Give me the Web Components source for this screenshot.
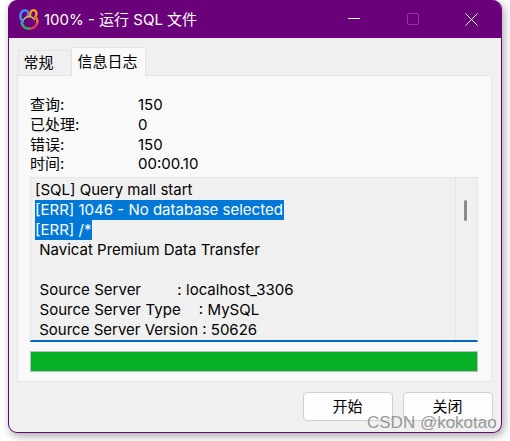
<!DOCTYPE html>
<html lang="zh">
<head>
<meta charset="utf-8">
<style>
html, body { margin: 0; padding: 0; background: #fff; }
body { width: 510px; height: 441px; overflow: hidden; font: 15px Inter, "Noto Sans CJK SC", sans-serif; color: #000; }
</style>
</head>
<body>
<app-window title-text="100% - 运行 SQL 文件">
  <tab-view>
    <stat-list>
      <span>查询:</span><span>150</span>
      <span>已处理:</span><span>0</span>
      <span>错误:</span><span>150</span>
      <span>时间:</span><span>00:00.10</span>
    </stat-list>
    <log-view></log-view>
    <progress-line></progress-line>
  </tab-view>
  <div slot="buttons" style="display:flex;justify-content:flex-end;gap:10px">
    <win-button>开始</win-button>
    <win-button>关闭</win-button>
  </div>
</app-window>
<script>
class AppWindow extends HTMLElement {
    constructor() {
        super();
        this.shadow = this.attachShadow({mode: 'open'});
    }
    connectedCallback() {
        this.shadow.innerHTML = `
        <style>
            :host {
                display: flex;
                flex-direction: column;
                box-sizing: border-box;
                width: 494px;
                height: 433px;
                margin-left: 8px;
                background: #f0f0f0;
                border: 1px solid #6a007a;
                border-top: 0;
                border-radius: 9px;
                box-shadow: 2px 3px 9px rgba(0,0,0,.35);
                overflow: hidden;
            }
            .title {
                display: flex;
                align-items: center;
                height: 38px;
                flex: none;
                background: #6a007a;
                color: #fff;
                font-size: 15px;
                padding-left: 9px;
            }
            .title svg.logo { width: 22px; height: 22px; margin-right: 4px; flex: none; }
            .name { flex: 1; padding-bottom: 1px; }
            .ctl { width: 59px; height: 38px; display: flex; align-items: center; justify-content: center; flex: none; }
            .body { flex: 1; display: flex; flex-direction: column; padding: 9px 9.5px 0 7.5px; }
            .foot { padding: 10px 0 0 0; margin-right: -1px; }
        </style>
        <div class="title">
            <svg class="logo" viewBox="0 0 22 22" fill="none" stroke-width="2.4" stroke-linecap="round">
                <path d="M4.8 13.5C1.2 10.5 1.6 4.6 5.4 2.6 8 1.4 10.2 3.2 10.2 6" stroke="#3d8ff2"/>
                <path d="M10.2 6C10.2 7 9.8 8 9.2 8.6" stroke="#7d6fe6"/>
                <path d="M12.2 8C11.4 4.4 13.6 1.8 16 2.2 18.8 2.8 19.2 6 17.4 8.8" stroke="#f5a21c"/>
                <path d="M17.4 8.8C19.4 11 19.8 13.8 18.8 16" stroke="#f0752a"/>
                <path d="M18.8 16C17.4 19 14.4 20.6 11.2 20.6" stroke="#e23d4e"/>
                <path d="M11.2 20.6C8 20.6 5 18.6 3.9 15.6" stroke="#2fb457"/>
                <path d="M3.9 15.6C3.6 14.6 3.7 14 4.8 13.5" stroke="#2aa7b8"/>
                <path d="M5.6 11.6C7 9.6 9 8.6 11 8.6 13.4 8.6 15.4 9.8 16.6 11.6" stroke="#c9d147" stroke-width="1.3"/>
            </svg>
            <span class="name">${this.getAttribute('title-text')}</span>
            <div class="ctl"><svg width="12" height="12" viewBox="0 0 12 12"><path d="M0 5.5H12" stroke="#fff" stroke-width="1"/></svg></div>
            <div class="ctl"><svg width="12" height="12" viewBox="0 0 12 12"><rect x=".5" y=".5" width="11" height="11" rx="1.5" fill="none" stroke="#8a3d98"/></svg></div>
            <div class="ctl"><svg width="13" height="13" viewBox="0 0 13 13"><path d="M.5 .5L12.5 12.5M12.5 .5L.5 12.5" stroke="#fff" stroke-width="1"/></svg></div>
        </div>
        <div class="body">
            <slot></slot>
            <div class="foot"><slot name="buttons"></slot></div>
        </div>`;
    }
}
class TabView extends HTMLElement {
    constructor() {
        super();
        this.shadow = this.attachShadow({mode: 'open'});
    }
    connectedCallback() {
        this.shadow.innerHTML = `
        <style>
            :host { display: block; }
            .tabs { display: flex; align-items: flex-end; height: 28px; padding-left: 1px; position: relative; z-index: 1; }
            .tab { box-sizing: border-box; height: 25px; width: 53px; border: 1px solid #e5e5e5; border-bottom: 0; background: #f0f0f0; padding-left: 5px; line-height: 24px; }
            .tab.on { width: 75px; background: #f9f9f9; padding-left: 6px; line-height: 28px; border-radius: 2px 2px 0 0; margin-bottom: -1px; height: 29px; }
            .panel { box-sizing: border-box; height: 307px; background: #f9f9f9; border: 1px solid #e5e5e5; padding: 19px 12.5px 0 12.5px; }
        </style>
        <div class="tabs"><div class="tab">常规</div><div class="tab on">信息日志</div></div>
        <div class="panel"><slot></slot></div>`;
    }
}
class StatList extends HTMLElement {
    constructor() {
        super();
        this.shadow = this.attachShadow({mode: 'open'});
    }
    connectedCallback() {
        this.shadow.innerHTML = `
        <style>
            :host { display: grid; grid-template-columns: 108px 1fr; grid-auto-rows: 19.75px; line-height: 19.75px; }
        </style>
        <slot></slot>`;
    }
}
class LogView extends HTMLElement {
    constructor() {
        super();
        this.shadow = this.attachShadow({mode: 'open'});
    }
    connectedCallback() {
        this.shadow.innerHTML = `
        <style>
            :host { display: flex; box-sizing: border-box; height: 165px; margin-top: 3px; background: #f0f0f0; border: 1px solid #e5e5e5; border-bottom: 2px solid #0067c0; }
            .text { flex: 1; overflow: hidden; padding: 2px 0 0 4px; white-space: pre; line-height: 20px; }
            .sel { background: #0078d7; color: #fff; display: inline-block; padding: 0 1px 0 0; }
            .wide { word-spacing: .3px; }
            .bar { width: 21px; border-left: 1px solid #e5e5e5; flex: none; }
            .thumb { width: 3px; height: 21px; background: #8a8a8a; border-radius: 2px; margin: 22px 0 0 7.5px; }
        </style>
        <div class="text"><div>[SQL] Query mall start</div><div><span class="sel">[ERR] 1046 - No database selected</span></div><div><span class="sel">[ERR] /*</span></div><div> Navicat Premium Data Transfer</div><div> </div><div class="wide"> Source Server        : localhost_3306</div><div class="wide"> Source Server Type    : MySQL</div><div> Source Server Version : 50626</div></div>
        <div class="bar"><div class="thumb"></div></div>`;
    }
}
class ProgressLine extends HTMLElement {
    constructor() {
        super();
        this.shadow = this.attachShadow({mode: 'open'});
    }
    connectedCallback() {
        this.shadow.innerHTML = `
        <style>
            :host { display: block; box-sizing: border-box; height: 21px; margin-top: 9px; background: #06b025; border: 1px solid #bcbcbc; }
        </style>`;
    }
}
class WinButton extends HTMLElement {
    constructor() {
        super();
        this.shadow = this.attachShadow({mode: 'open'});
    }
    connectedCallback() {
        this.shadow.innerHTML = `
        <style>
            :host { display: block; box-sizing: border-box; width: 90px; height: 29px; background: #fdfdfd; border: 1px solid #d0d0d0; border-radius: 4px; text-align: center; line-height: 27px; }
        </style>
        <slot></slot>`;
    }
}
class WaterMark extends HTMLElement {
    constructor() {
        super();
        this.shadow = this.attachShadow({mode: 'open'});
    }
    connectedCallback() {
        this.shadow.innerHTML = `
        <style>
            :host { position: absolute; left: 367px; top: 413px; color: rgba(110,110,110,.7); font: 17px/20px "Liberation Sans", sans-serif; white-space: nowrap; }
        </style>
        CSDN @kokotao`;
    }
}
customElements.define('app-window', AppWindow);
customElements.define('tab-view', TabView);
customElements.define('stat-list', StatList);
customElements.define('log-view', LogView);
customElements.define('progress-line', ProgressLine);
customElements.define('win-button', WinButton);
customElements.define('water-mark', WaterMark);
document.body.appendChild(document.createElement('water-mark'));
</script>
</body>
</html>
